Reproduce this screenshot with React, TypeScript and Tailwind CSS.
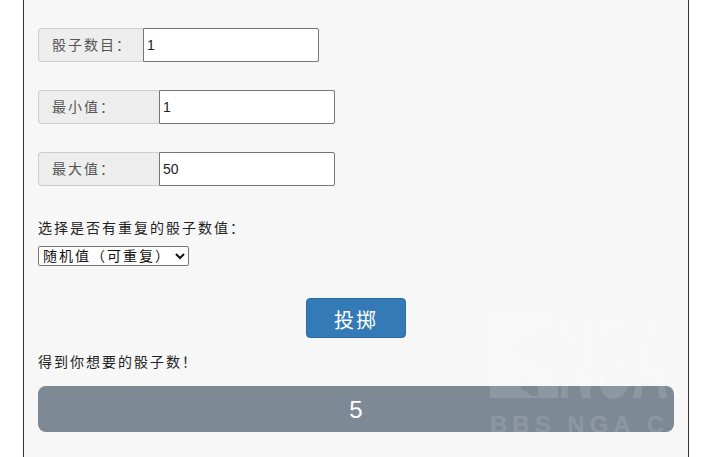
const cjk = { fontFamily: '"Liberation Sans", "Noto Sans CJK SC", sans-serif' };

function InputRow({ label, value, labelWidth }: { label: string; value: string; labelWidth: string }) {
  return (
    <div className="flex h-[34px] w-fit">
      <span
        className={`flex items-center rounded-l-[4px] border border-r-0 border-[#cccccc] bg-[#eeeeee] pl-[13px] text-[14px] tracking-[2px] text-[#555555] ${labelWidth}`}
      >
        {label}
      </span>
      <input
        readOnly
        value={value}
        className="h-[34px] w-[176px] rounded-r-[2px] border border-[#767676] bg-white px-[3px] text-[14px] text-[#222222] outline-none"
      />
    </div>
  );
}

function Watermark() {
  return (
    <div className="pointer-events-none absolute left-[480px] top-[300px] h-[140px] w-[200px] text-white opacity-[0.12]">
      <svg className="absolute left-[10px] top-[10px]" width="68" height="88" viewBox="0 0 68 88">
        <path d="M0 0H62V14L20 38L62 62L68 70V88H0Z M30 78L42 86H48V74L34 70Z" fill="currentColor" fillRule="evenodd" />
      </svg>
      <span className="absolute left-[78px] top-[7px] origin-left scale-x-[0.42] text-[118px] font-bold leading-[100px]">
        NGA
      </span>
      <span className="absolute left-[10px] top-[111px] text-[24px] font-bold leading-[28px] tracking-[5px]">BBS NGA C</span>
    </div>
  );
}

export default function App() {
  return (
    <div className="relative h-[457px] w-[714px] overflow-hidden bg-white" style={cjk}>
      <div className="mx-[23px] h-[457px] w-[666px] border-x border-[#333333] bg-[#f7f7f7] px-[14px] pt-[28px]">
        <div className="flex flex-col gap-[28px]">
          <InputRow label="骰子数目：" value="1" labelWidth="w-[105px]" />
          <InputRow label="最小值：" value="1" labelWidth="w-[121px]" />
          <InputRow label="最大值：" value="50" labelWidth="w-[121px]" />
        </div>
        <p className="mt-[32px] text-[14px] leading-[20px] tracking-[2px] text-[#222222]">选择是否有重复的骰子数值：</p>
        <select className="mt-[8px] block h-[20px] w-[151px] rounded-[2px] border border-[#767676] bg-white text-[14px] tracking-[2px] text-[#111111]">
          <option>随机值（可重复）</option>
        </select>
        <div className="mt-[32px] flex justify-center">
          <button className="h-[40px] w-[100px] rounded-[4px] border border-[#2e6da4] bg-[#337ab7] pt-[5px] text-[20px] tracking-[2px] text-white">
            投掷
          </button>
        </div>
        <p className="mt-[14px] text-[14px] leading-[20px] tracking-[2px] text-[#222222]">得到你想要的骰子数！</p>
        <div className="mt-[14px] flex h-[46px] w-[636px] items-center justify-center rounded-[8px] bg-[#7d8995] pt-[2px] text-[24px] text-white">
          5
        </div>
      </div>
      <Watermark />
    </div>
  );
}
